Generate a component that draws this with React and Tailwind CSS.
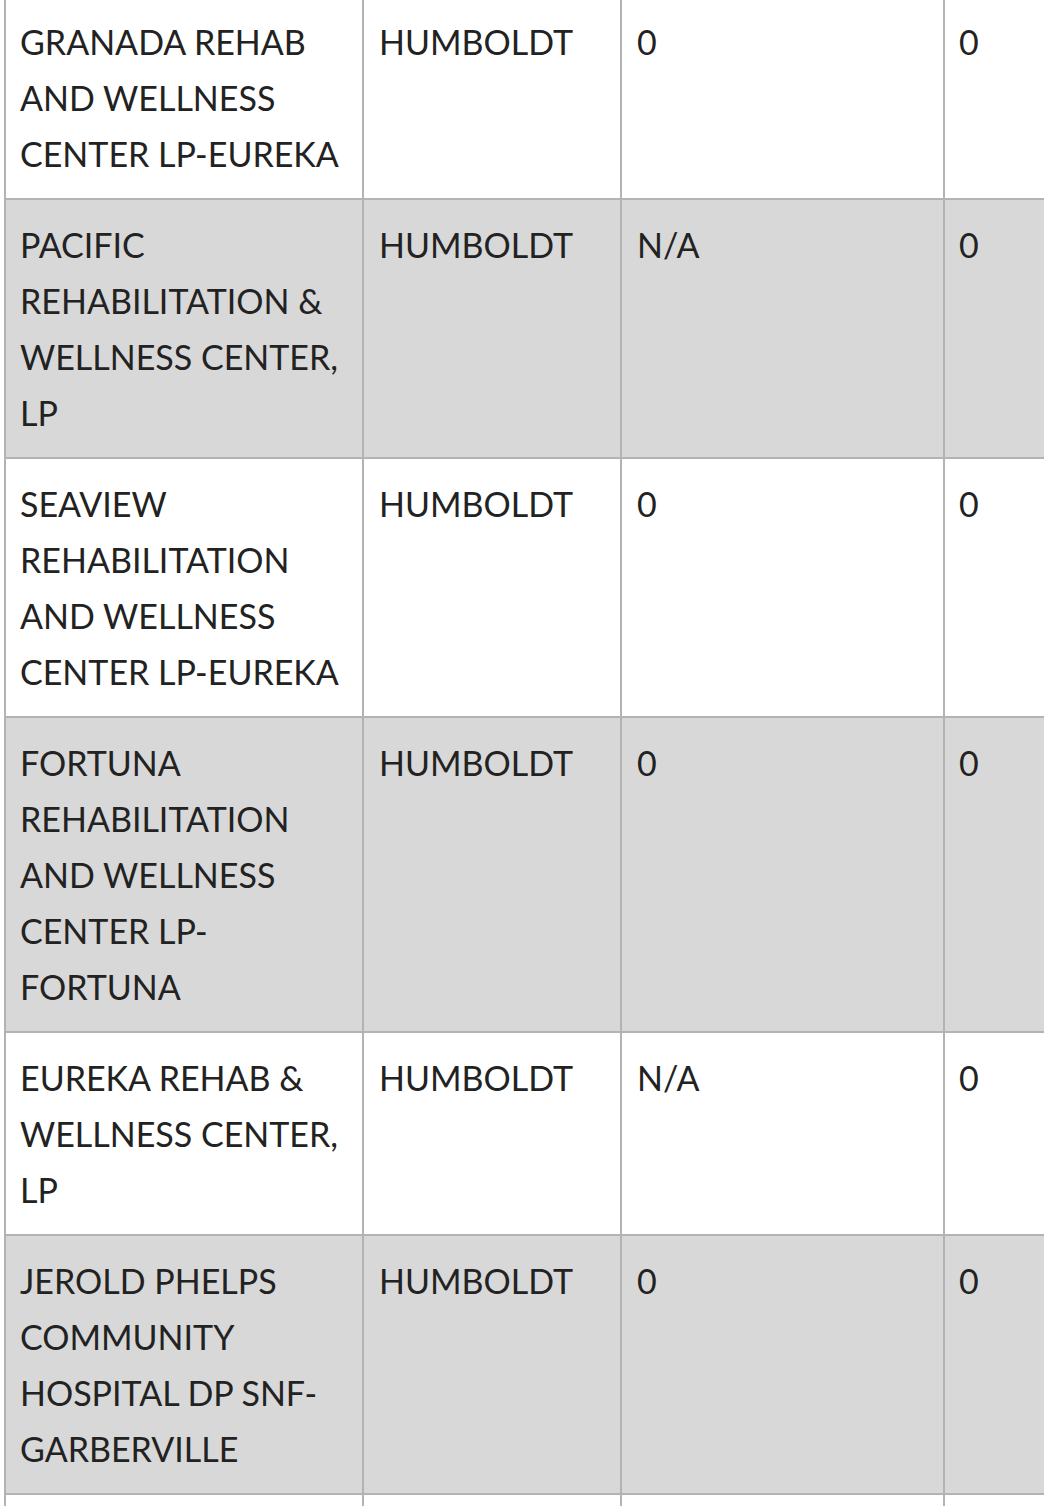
const ROWS = [
  { name: ['GRANADA REHAB', 'AND WELLNESS', 'CENTER LP-EUREKA'], county: 'HUMBOLDT', a: '0', b: '0' },
  { name: ['PACIFIC', 'REHABILITATION &', 'WELLNESS CENTER,', 'LP'], county: 'HUMBOLDT', a: 'N/A', b: '0' },
  { name: ['SEAVIEW', 'REHABILITATION', 'AND WELLNESS', 'CENTER LP-EUREKA'], county: 'HUMBOLDT', a: '0', b: '0' },
  { name: ['FORTUNA', 'REHABILITATION', 'AND WELLNESS', 'CENTER LP-', 'FORTUNA'], county: 'HUMBOLDT', a: '0', b: '0' },
  { name: ['EUREKA REHAB &', 'WELLNESS CENTER,', 'LP'], county: 'HUMBOLDT', a: 'N/A', b: '0' },
  { name: ['JEROLD PHELPS', 'COMMUNITY', 'HOSPITAL DP SNF-', 'GARBERVILLE'], county: 'HUMBOLDT', a: '0', b: '0' },
  // next row only peeks in at the bottom edge
  { name: [''], county: '', a: '', b: '' },
];

export default function App() {
  return (
    <div className="w-[1044px] h-[1506px] overflow-hidden bg-white">
      <div
        className="mt-[-5px] ml-[4px] w-[1200px] border-l-2 border-[#b3b3b3] text-[#222] text-[34px] leading-[56px]"
        style={{ fontFamily: 'Lato, "Open Sans", sans-serif' }}
      >
        {ROWS.map((row, i) => (
          <div
            key={i}
            className={`grid grid-cols-[358px_258px_323px_1fr] border-t-2 border-[#b3b3b3] ${i % 2 ? 'bg-[#d8d8d8]' : 'bg-white'}`}
          >
            <div className="border-r-2 border-[#b3b3b3] pl-[14px] pt-[17px] pb-[16px]">
              {row.name.map((line, j) => (
                <div key={j} className="whitespace-nowrap min-h-[56px]">{line}</div>
              ))}
            </div>
            <div className="border-r-2 border-[#b3b3b3] pl-[15px] pt-[17px] pb-[16px]">{row.county}</div>
            <div className="border-r-2 border-[#b3b3b3] pl-[15px] pt-[17px] pb-[16px]">{row.a}</div>
            <div className="pl-[14px] pt-[17px] pb-[16px]">{row.b}</div>
          </div>
        ))}
      </div>
    </div>
  );
}
